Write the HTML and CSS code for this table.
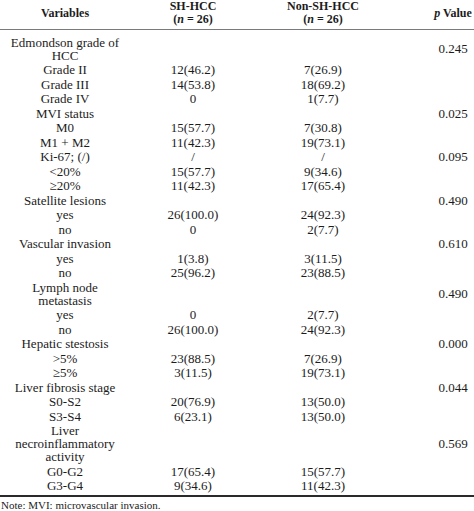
FILE: index.html
```html
<!DOCTYPE html>
<html>
<head>
<meta charset="utf-8">
<link rel="stylesheet" href="styles.css">
</head>
<body>
<table class="tbl">
  <colgroup>
    <col class="c1"><col class="c2"><col class="c3"><col class="c4">
  </colgroup>
  <thead>
    <tr>
      <th>Variables</th>
      <th>SH-HCC<br>(<i>n</i> = 26)</th>
      <th>Non-SH-HCC<br>(<i>n</i> = 26)</th>
      <th class="pv"><i>p</i> Value</th>
    </tr>
  </thead>
  <tbody>
    <tr class="first"><td>Edmondson grade of<br>HCC</td><td></td><td></td><td class="pv">0.245</td></tr>
    <tr><td>Grade II</td><td>12(46.2)</td><td>7(26.9)</td><td class="pv"></td></tr>
    <tr><td>Grade III</td><td>14(53.8)</td><td>18(69.2)</td><td class="pv"></td></tr>
    <tr><td>Grade IV</td><td>0</td><td>1(7.7)</td><td class="pv"></td></tr>
    <tr><td>MVI status</td><td></td><td></td><td class="pv">0.025</td></tr>
    <tr><td>M0</td><td>15(57.7)</td><td>7(30.8)</td><td class="pv"></td></tr>
    <tr><td>M1 + M2</td><td>11(42.3)</td><td>19(73.1)</td><td class="pv"></td></tr>
    <tr><td>Ki-67; (/)</td><td>/</td><td>/</td><td class="pv">0.095</td></tr>
    <tr><td>&lt;20%</td><td>15(57.7)</td><td>9(34.6)</td><td class="pv"></td></tr>
    <tr><td>≥20%</td><td>11(42.3)</td><td>17(65.4)</td><td class="pv"></td></tr>
    <tr><td>Satellite lesions</td><td></td><td></td><td class="pv">0.490</td></tr>
    <tr><td>yes</td><td>26(100.0)</td><td>24(92.3)</td><td class="pv"></td></tr>
    <tr><td>no</td><td>0</td><td>2(7.7)</td><td class="pv"></td></tr>
    <tr><td>Vascular invasion</td><td></td><td></td><td class="pv">0.610</td></tr>
    <tr><td>yes</td><td>1(3.8)</td><td>3(11.5)</td><td class="pv"></td></tr>
    <tr><td>no</td><td>25(96.2)</td><td>23(88.5)</td><td class="pv"></td></tr>
    <tr><td>Lymph node<br>metastasis</td><td></td><td></td><td class="pv">0.490</td></tr>
    <tr><td>yes</td><td>0</td><td>2(7.7)</td><td class="pv"></td></tr>
    <tr><td>no</td><td>26(100.0)</td><td>24(92.3)</td><td class="pv"></td></tr>
    <tr><td>Hepatic stestosis</td><td></td><td></td><td class="pv">0.000</td></tr>
    <tr><td>&gt;5%</td><td>23(88.5)</td><td>7(26.9)</td><td class="pv"></td></tr>
    <tr><td>≥5%</td><td>3(11.5)</td><td>19(73.1)</td><td class="pv"></td></tr>
    <tr><td>Liver fibrosis stage</td><td></td><td></td><td class="pv">0.044</td></tr>
    <tr><td>S0-S2</td><td>20(76.9)</td><td>13(50.0)</td><td class="pv"></td></tr>
    <tr><td>S3-S4</td><td>6(23.1)</td><td>13(50.0)</td><td class="pv"></td></tr>
    <tr><td>Liver<br>necroinflammatory<br>activity</td><td></td><td></td><td class="pv">0.569</td></tr>
    <tr><td>G0-G2</td><td>17(65.4)</td><td>15(57.7)</td><td class="pv"></td></tr>
    <tr class="last"><td>G3-G4</td><td>9(34.6)</td><td>11(42.3)</td><td class="pv"></td></tr>
  </tbody>
</table>
<p class="note">Note: MVI: microvascular invasion.</p>
</body>
</html>
```
FILE: styles.css
```css
html, body {
  margin: 0;
  padding: 0;
  background: #ffffff;
}
body {
  font-family: "Liberation Serif", "Times New Roman", serif;
  color: #1c1c1c;
  overflow: hidden;
}
.tbl {
  width: 474px;
  table-layout: fixed;
  border-collapse: separate;
  border-spacing: 0;
}
.c1 { width: 130px; }
.c2 { width: 126px; }
.c3 { width: 134px; }
.c4 { width: 84px; }
.tbl th {
  font-size: 12px;
  font-weight: bold;
  line-height: 13px;
  padding: 0 0 3px 0;
  border-bottom: 1px solid #7a7a7a;
  text-align: center;
  vertical-align: middle;
}
.tbl td {
  font-size: 13px;
  line-height: 13px;
  padding: 0.75px 0;
  text-align: center;
  vertical-align: middle;
  white-space: nowrap;
}
.tbl .pv {
  padding-left: 42px;
}
.tbl tr.first td {
  padding-top: 5.5px;
}
.tbl tr.last td {
  padding-bottom: 3.25px;
  border-bottom: 2px solid #2a2a2a;
}
.note {
  margin: 1.5px 0 0 1px;
  font-size: 11px;
  line-height: 13px;
}
```
